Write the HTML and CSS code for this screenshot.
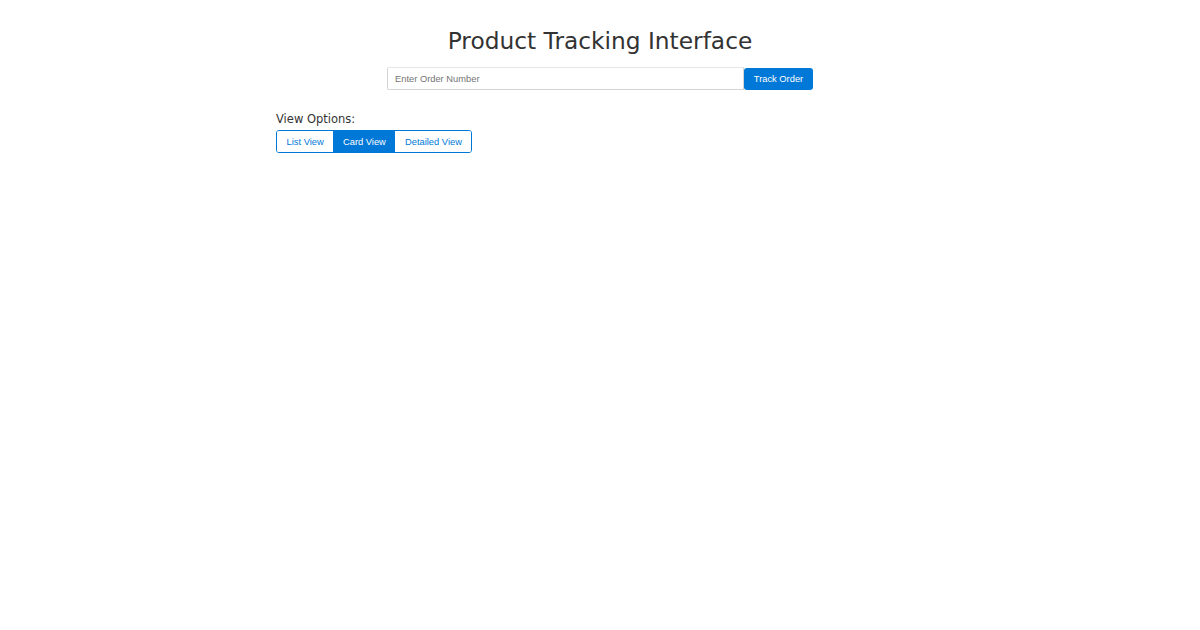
FILE: index.html
```html
<!DOCTYPE html>
<html lang="en">
<head>
<meta charset="utf-8">
<title>Product Tracking Interface</title>
<link rel="stylesheet" href="styles.css">
</head>
<body>
<div class="container">
  <h1 class="title">Product Tracking Interface</h1>
  <form class="search" onsubmit="return false;">
    <input class="search-input" type="text" placeholder="Enter Order Number">
    <button class="search-button" type="submit">Track Order</button>
  </form>
  <div class="view-options">
    <div class="view-label">View Options:</div>
    <div class="view-group">
      <button class="view-button" type="button">List View</button>
      <button class="view-button active" type="button">Card View</button>
      <button class="view-button" type="button">Detailed View</button>
    </div>
  </div>
</div>
</body>
</html>
```
FILE: styles.css
```css
html, body {
  margin: 0;
  padding: 0;
  background: #ffffff;
}

body {
  font-family: "DejaVu Sans", sans-serif;
  color: #333333;
}

.container {
  width: 648px;
  margin: 0 auto;
  padding-top: 27px;
}

.title {
  margin: 0;
  font-size: 23.3px;
  font-weight: normal;
  line-height: 27px;
  text-align: center;
  color: #333333;
}

.search {
  display: flex;
  justify-content: center;
  align-items: flex-start;
  margin-top: 13px;
}

.search-input {
  box-sizing: border-box;
  width: 357px;
  height: 23px;
  margin: 0;
  padding: 0 7px;
  border: 1px solid #d4d4d4;
  border-top-color: #e6e6e6;
  border-radius: 2px 0 0 2px;
  font-family: "Liberation Sans", Arial, sans-serif;
  font-size: 9.33px;
  color: #333333;
  outline: none;
}

.search-input::placeholder {
  color: #757575;
}

.search-button {
  box-sizing: border-box;
  width: 69px;
  height: 22px;
  margin: 1px 0 0 0;
  padding: 0;
  border: none;
  border-radius: 3px;
  background: #0078d7;
  color: #ffffff;
  font-family: "Liberation Sans", Arial, sans-serif;
  font-size: 9.33px;
}

.view-options {
  margin-top: 23px;
}

.view-label {
  font-size: 11.5px;
  line-height: 13px;
  color: #333333;
}

.view-group {
  display: inline-flex;
  margin-top: 4px;
  border: 1px solid #0078d7;
  border-radius: 3px;
  overflow: hidden;
}

.view-button {
  height: 21px;
  margin: 0;
  padding: 0 9.6px;
  border: none;
  background: #ffffff;
  color: #0078d7;
  font-family: "Liberation Sans", Arial, sans-serif;
  font-size: 9.33px;
}

.view-button.active {
  background: #0078d7;
  color: #ffffff;
}
```
